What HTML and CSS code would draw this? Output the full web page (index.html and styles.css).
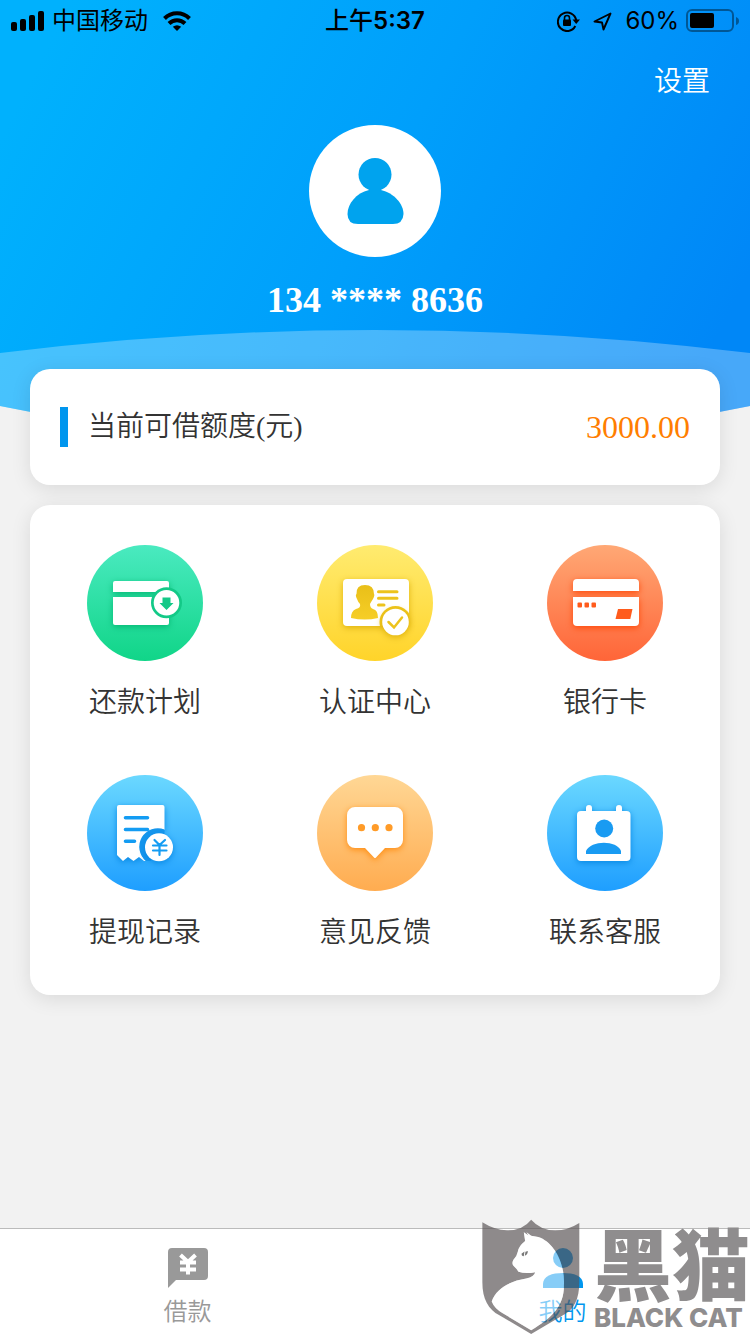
FILE: index.html
```html
<!DOCTYPE html>
<html lang="zh-CN">
<head>
<meta charset="utf-8">
<meta name="viewport" content="width=device-width, initial-scale=1">
<title>我的</title>
<link rel="stylesheet" href="styles.css">
</head>
<body>
<div class="page">
  <header class="hero">
    <svg class="backdrop" viewBox="0 0 750 450" preserveAspectRatio="none" aria-hidden="true">
      <defs>
        <linearGradient id="sky" gradientUnits="userSpaceOnUse" x1="40" y1="60" x2="690" y2="390">
          <stop offset="0" stop-color="#00b1fd"/><stop offset=".5" stop-color="#009ffb"/><stop offset="1" stop-color="#0087f7"/>
        </linearGradient>
      </defs>
      <path d="M0 0H750V406Q375 482 0 406Z" fill="url(#sky)"/>
      <path d="M0 353Q375 307 750 353V406Q375 482 0 406Z" fill="#fff" fill-opacity=".28"/>
    </svg>
    <div class="status">
      <div class="status-side">
        <svg width="34" height="20" viewBox="0 0 34 20" aria-hidden="true"><rect y="11" width="6" height="9" rx="2"/><rect x="9" y="8" width="6" height="12" rx="2"/><rect x="18" y="4" width="6" height="16" rx="2"/><rect x="27" width="6" height="20" rx="2"/></svg>
        <span class="carrier">中国移动</span>
        <svg class="wifi" width="28" height="20" viewBox="0 0 28 20" fill="none" stroke="#000" stroke-width="4" aria-hidden="true"><path d="M1.500 7.500C8.500.500 19.500.500 26.500 7.500"/><path d="M6 12.500C10.500 8 17.500 8 22 12.500"/><path d="M9.800 15.800Q14 12.800 18.200 15.800L14 20Z" fill="#000" stroke="none"/></svg>
      </div>
      <span class="clock"><span class="meridiem">上午</span>5:37</span>
      <div class="status-side status-right">
        <svg width="23" height="22" viewBox="0 0 23 22" fill="none" stroke="#000" stroke-width="2" aria-hidden="true"><path d="M18.300 16A9.200 9.200 0 1 1 19.200 10.500"/><path d="M15.500 9.500H23L19.200 14Z" fill="#000" stroke="none"/><rect x="6" y="9.500" width="8" height="6.500" rx="1" fill="#000" stroke="none"/><path d="M7.500 10V8a2.500 2.500 0 0 1 5 0V10" stroke-width="1.600"/></svg>
        <svg class="locate" width="19" height="19" viewBox="0 0 19 19" fill="none" stroke="#000" stroke-width="1.900" stroke-linejoin="round" aria-hidden="true"><path d="M17.500 1.500L1.500 9.500L9 10.500L10.500 17.500Z"/></svg>
        <span class="battery-text">60%</span>
        <svg width="53" height="24" viewBox="0 0 53 24" aria-hidden="true"><rect x="1" y="1" width="46" height="21" rx="5" fill="none" stroke="#000" stroke-opacity=".4" stroke-width="2"/><rect x="4" y="4" width="24" height="15" rx="2"/><path d="M50 8Q53 9 53 12T50 16Z" fill-opacity=".4"/></svg>
      </div>
    </div>
    <a class="settings" href="#settings">设置</a>
    <svg class="avatar" viewBox="0 0 132 132" role="img" aria-label="头像"><circle cx="66" cy="66" r="66" fill="#fff"/><circle cx="66" cy="49.500" r="16.500" fill="#00a3ee"/><path d="M60 65H72C85 68 94.500 79 94.500 89Q94 99 84 99H49Q38.500 99 38.500 89C38.500 79 47 68 60 65Z" fill="#00a3ee"/></svg>
    <h1 class="phone">134 **** 8636</h1>
  </header>

  <main class="content">
    <section class="card quota">
      <h2 class="quota-label">当前可借额度(元)</h2>
      <span class="amount">3000.00</span>
    </section>

    <nav class="card menu" aria-label="服务">
      <a class="item" href="#plan">
        <svg class="icon" viewBox="0 0 116 116" aria-hidden="true">
          <defs><linearGradient id="green" x2="0" y2="1"><stop stop-color="#4aeac0"/><stop offset="1" stop-color="#10d588"/></linearGradient></defs>
          <circle cx="58" cy="58" r="58" fill="url(#green)"/>
          <g class="lift green"><path d="M28 36H80a2 2 0 0 1 2 2V47H26V38a2 2 0 0 1 2-2Z" fill="#fff"/><path d="M26 52H82V78a2 2 0 0 1-2 2H28a2 2 0 0 1-2-2Z" fill="#fff"/></g>
          <circle cx="79.500" cy="57.700" r="15.500" fill="#13c987"/><circle cx="79.500" cy="57.700" r="12.800" fill="#fff"/><path d="M75.500 52.500H83.500V58H86.500L79.500 65L72.500 58H75.500Z" fill="#13c987"/>
        </svg>
        <span class="label">还款计划</span>
      </a>
      <a class="item" href="#verify">
        <svg class="icon" viewBox="0 0 116 116" aria-hidden="true">
          <defs><linearGradient id="yellow" x2="0" y2="1"><stop stop-color="#ffeb70"/><stop offset="1" stop-color="#ffd42a"/></linearGradient><linearGradient id="gold" x2="0" y2="1"><stop stop-color="#e9bf18"/><stop offset="1" stop-color="#f6ce27"/></linearGradient><clipPath id="idcard"><rect x="26" y="34" width="66" height="47" rx="4"/></clipPath></defs>
          <circle cx="58" cy="58" r="58" fill="url(#yellow)"/>
          <g class="lift gold"><rect x="26" y="34" width="66" height="47" rx="4" fill="#fff"/></g>
          <path d="M48 40Q57 40 57 49Q58 50 56 54Q54 57 53 59Q53 63 56 64Q61 65 61 73Q48 76 34 73Q34 66 39 64Q44 63 43 59Q41 57 40 54Q38 50 39.500 49Q39 40 48 40Z" fill="url(#gold)"/>
          <path d="M61.500 46.700H80M61.500 53.300H80M61.500 60H67" stroke="#edc31c" stroke-width="3" stroke-linecap="round"/>
          <circle cx="78.500" cy="77" r="16" fill="#eec51c" clip-path="url(#idcard)"/><circle class="lift gold" cx="78.500" cy="77" r="13.300" fill="#fff"/><path d="M71.500 77L77 82.500L85 72.500" fill="none" stroke="#edc31c" stroke-width="2.500" stroke-linecap="round"/>
        </svg>
        <span class="label">认证中心</span>
      </a>
      <a class="item" href="#bank">
        <svg class="icon" viewBox="0 0 116 116" aria-hidden="true">
          <defs><linearGradient id="orange" x2="0" y2="1"><stop stop-color="#ffa875"/><stop offset="1" stop-color="#ff6538"/></linearGradient></defs>
          <circle cx="58" cy="58" r="58" fill="url(#orange)"/>
          <g class="lift red"><path d="M30 34H88a4 4 0 0 1 4 4V46H26V38a4 4 0 0 1 4-4Z" fill="#fff"/><path d="M26 52H92V77a4 4 0 0 1-4 4H30a4 4 0 0 1-4-4Z" fill="#fff"/></g>
          <g fill="#ff5b1c"><rect x="30.500" y="57.500" width="4.500" height="5" rx="1"/><rect x="37.500" y="57.500" width="4.500" height="5" rx="1"/><rect x="44.500" y="57.500" width="4.500" height="5" rx="1"/><path d="M71 64H85.500L83.300 74H68.500Z"/></g>
        </svg>
        <span class="label">银行卡</span>
      </a>
      <a class="item" href="#records">
        <svg class="icon" viewBox="0 0 116 116" aria-hidden="true">
          <defs><linearGradient id="blue" x2="0" y2="1"><stop stop-color="#6bd8ff"/><stop offset="1" stop-color="#1e9eff"/></linearGradient></defs>
          <circle cx="58" cy="58" r="58" fill="url(#blue)"/>
          <path class="lift blue" d="M32 30H75.500a2 2 0 0 1 2 2V55A18.500 18.500 0 0 0 59 86H57L52 82L46.500 86L41 82L36 86L30 80V32a2 2 0 0 1 2-2Z" fill="#fff"/>
          <path d="M38.500 42.700H60.500M38.500 54.500H60.500M38.500 66.300H47.500" stroke="#139cf3" stroke-width="3.600" stroke-linecap="round"/>
          <path d="M77.500 54.500A18.500 18.500 0 0 0 59 86H64L77.500 59Z" fill="#1596ed"/><circle class="lift blue" cx="72" cy="72.300" r="14" fill="#fff"/>
          <path d="M67.500 65L72.500 70L78 65M66 70.500H79.500M66 75.500H79.500M72.500 70V80" fill="none" stroke="#139cf3" stroke-width="2.200" stroke-linecap="round"/>
        </svg>
        <span class="label">提现记录</span>
      </a>
      <a class="item" href="#feedback">
        <svg class="icon" viewBox="0 0 116 116" aria-hidden="true">
          <defs><linearGradient id="amber" x2="0" y2="1"><stop stop-color="#ffd795"/><stop offset="1" stop-color="#ffac50"/></linearGradient></defs>
          <circle cx="58" cy="58" r="58" fill="url(#amber)"/>
          <path class="lift amber" d="M38 32H78a8 8 0 0 1 8 8V65a8 8 0 0 1-8 8H68L59 82.500Q58 83.500 57 82.500L48 73H38a8 8 0 0 1-8-8V40a8 8 0 0 1 8-8Z" fill="#fff"/>
          <g fill="#ff9b28"><circle cx="44.500" cy="52.700" r="3.600"/><circle cx="58.300" cy="52.700" r="3.600"/><circle cx="72" cy="52.700" r="3.600"/></g>
        </svg>
        <span class="label">意见反馈</span>
      </a>
      <a class="item" href="#service">
        <svg class="icon" viewBox="0 0 116 116" aria-hidden="true">
          <circle cx="58" cy="58" r="58" fill="url(#blue)"/>
          <path class="lift blue" d="M34 36H39V33a3 3 0 0 1 6 0V36H69V33a3 3 0 0 1 6 0V36H79.500a4 4 0 0 1 4 4V82a4 4 0 0 1-4 4H34a4 4 0 0 1-4-4V40a4 4 0 0 1 4-4Z" fill="#fff"/>
          <circle cx="57.200" cy="53.500" r="9" fill="#199bf2"/><path d="M39 79V76C44 65 70 65 74 76V79Z" fill="#199bf2"/>
        </svg>
        <span class="label">联系客服</span>
      </a>
    </nav>
  </main>

  <nav class="tabs" aria-label="主导航">
    <a class="tab" href="#loan">
      <svg width="40" height="40" viewBox="0 0 40 40" aria-hidden="true"><path d="M4 0H36a4 4 0 0 1 4 4V28a4 4 0 0 1-4 4H8L0 40V4a4 4 0 0 1 4-4Z" fill="#999"/><path d="M12.500 7L20 14L27.500 7M12 14.500H28M12 21.500H28M20 13V26.500" fill="none" stroke="#fff" stroke-width="4"/></svg>
      <span>借款</span>
    </a>
    <a class="tab active" href="#me" aria-current="page">
      <svg width="40" height="40" viewBox="0 0 40 40" fill="#0096ee" aria-hidden="true"><circle cx="20" cy="10" r="10"/><path d="M0 40V36C0 28 9 25 20 25S40 28 40 36V40Z"/></svg>
      <span>我的</span>
    </a>
  </nav>

  <div class="watermark">
    <svg width="98" height="115" viewBox="33 26 293 344" aria-hidden="true">
      <path fill="#575052" fill-opacity=".67" fill-rule="evenodd" d="M34 36Q70 59 108 60Q155 60 180 28Q208 60 252 60Q290 60 324 38V215C324 265 308 298 275 314L180 370L85 314C52 296 34 265 34 215ZM158 66L162 92Q142 108 140 124Q137 139 127 148Q121 158 127 166Q138 176 142 184Q164 191 192 185Q190 198 165 204C120 211 75 232 62 273Q70 294 95 308L180 359C244 321 279 285 278 224C282 155 246 94 201 80L180 76L166 66L172 75Z"/>
      <path fill="#fff" fill-opacity=".53" d="M158 66L162 92Q142 108 140 124Q137 139 127 148Q121 158 127 166Q138 176 142 184Q164 191 192 185Q190 198 165 204C120 211 75 232 62 273Q70 294 95 308L180 359C244 321 279 285 278 224C282 155 246 94 201 80L180 76L166 66L172 75Z"/>
      <path fill="#777" d="M151 130L160 123L158 137Q151 138 151 130ZM163 124L170 122Q170 133 161 136Z"/>
    </svg>
    <div class="brand"><span class="brand-cn">黑猫</span><span class="brand-en">BLACK CAT</span></div>
  </div>
</div>
</body>
</html>
```
FILE: styles.css
```css
* {
  box-sizing: border-box;
}

body {
  margin: 0;
  background: #f2f2f2;
  color: #333;
  font-family: "Liberation Serif", "Noto Sans CJK SC", serif;
}

a {
  color: inherit;
  text-decoration: none;
}

svg {
  display: block;
  flex: none;
}

.page {
  position: relative;
  display: flex;
  flex-direction: column;
  min-height: 100vh;
}

.hero {
  position: relative;
  z-index: 0;
  display: flex;
  flex-direction: column;
  align-items: center;
  padding-bottom: 48px;
}

.backdrop {
  position: absolute;
  z-index: -1;
  top: 0;
  left: 0;
  width: 100%;
  height: 450px;
}

.status {
  display: grid;
  grid-template-columns: 1fr auto 1fr;
  align-items: center;
  width: 100%;
  height: 42px;
  padding: 0 11px;
  color: #000;
  font-family: Inter, "Noto Sans CJK SC", sans-serif;
  font-size: 24px;
  line-height: 42px;
}

.status-side {
  display: flex;
  align-items: center;
}

.status-right {
  justify-content: flex-end;
}

.carrier {
  margin: 0 15px 0 7px;
}

.clock {
  font-weight: 600;
}

.meridiem {
  font-weight: 500;
}

.locate {
  margin: 0 13px 0 13px;
}

.battery-text {
  margin-right: 7px;
}

.settings {
  align-self: flex-end;
  margin: 20px 40px 23px;
  color: #fff;
  font-size: 28px;
  font-weight: 350;
  line-height: 40px;
}

.avatar {
  width: 132px;
  height: 132px;
}

.phone {
  margin: 22px 0 0;
  color: #fff;
  font-size: 36px;
  line-height: 42px;
}

.content {
  position: relative;
  display: flex;
  flex: 1;
  flex-direction: column;
  gap: 20px;
  padding: 0 30px 30px;
}

.card {
  border-radius: 20px;
  background: #fff;
  box-shadow: 0 4px 20px rgba(0, 0, 0, .1);
}

.quota {
  display: flex;
  align-items: center;
  justify-content: space-between;
  padding: 38px 30px;
}

.quota-label {
  margin: 0;
  padding-left: 20px;
  border-left: 8px solid #0096ee;
  font-size: 28px;
  font-weight: 350;
  line-height: 40px;
}

.amount {
  color: #ff7e00;
  font-size: 32px;
  line-height: 40px;
}

.menu {
  display: grid;
  grid-template-columns: repeat(3, 1fr);
  row-gap: 52px;
  padding: 40px 0 42px;
}

.item {
  display: flex;
  flex-direction: column;
  align-items: center;
  gap: 22px;
}

.icon {
  width: 116px;
  height: 116px;
}

.lift {
  filter: drop-shadow(0 2px 3px var(--shade));
}

.green { --shade: #04b873; }
.gold { --shade: #dfb20d; }
.red { --shade: #ff4a0a; }
.blue { --shade: #0888e4; }
.amber { --shade: #ff8d12; }

.label {
  font-size: 28px;
  font-weight: 350;
  line-height: 40px;
}

.tabs {
  display: grid;
  grid-template-columns: 1fr 1fr;
  border-top: 1px solid #bbb;
  background: #fff;
}

.tab {
  display: flex;
  flex-direction: column;
  align-items: center;
  gap: 9px;
  padding: 19px 0 7px;
  color: #999;
  font-size: 24px;
  font-weight: 350;
  line-height: 30px;
}

.active {
  color: #0096ee;
}

.watermark {
  position: absolute;
  right: 0;
  bottom: 0;
  display: flex;
  gap: 14px;
  pointer-events: none;
}

.brand {
  display: flex;
  flex-direction: column;
  color: #8f8d8e;
}

.brand-cn {
  font-family: "Noto Sans CJK SC", sans-serif;
  font-size: 78px;
  font-weight: 900;
  line-height: 84px;
}

.brand-en {
  font-family: Inter, sans-serif;
  font-size: 26px;
  font-weight: 800;
  line-height: 30px;
}
```
